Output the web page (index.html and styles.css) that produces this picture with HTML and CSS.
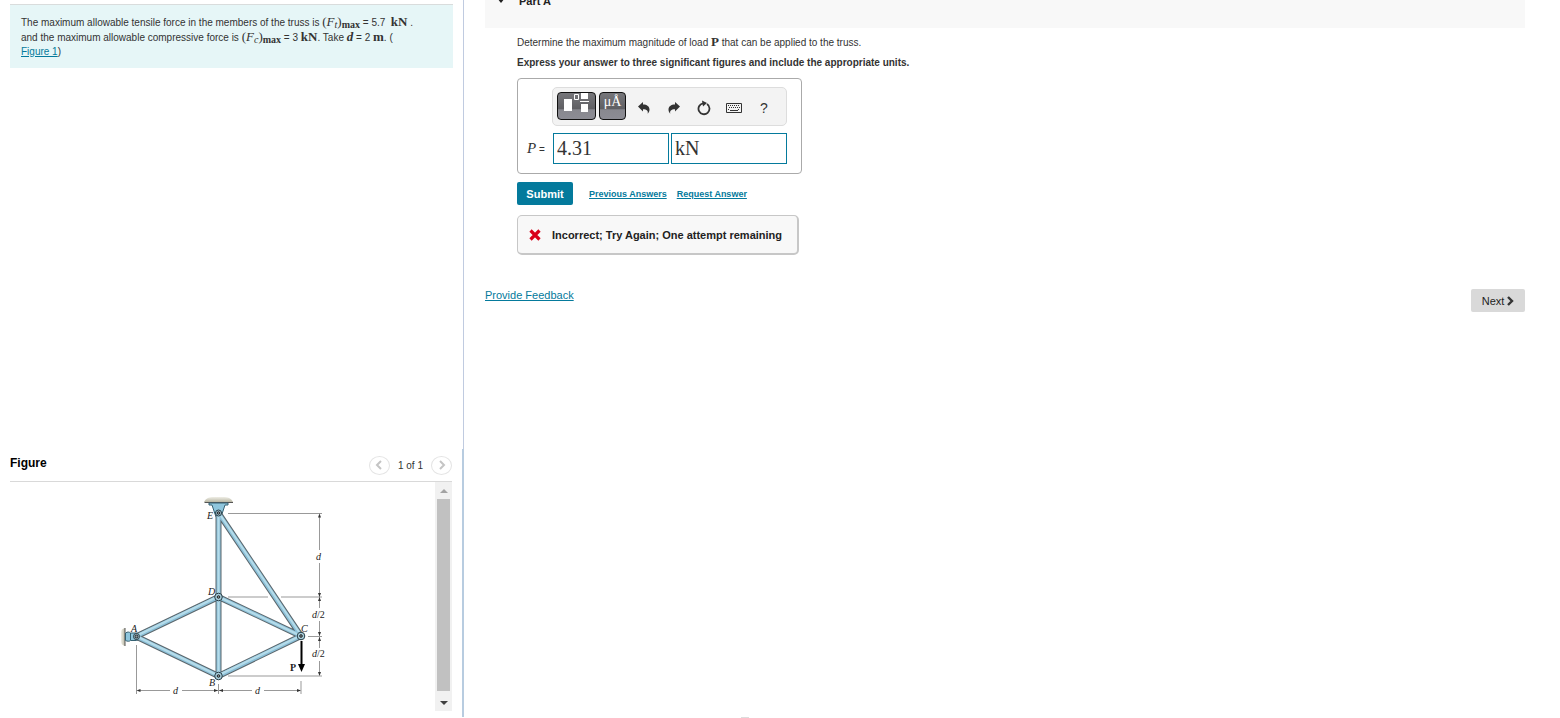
FILE: index.html
```html
<!DOCTYPE html>
<html lang="en">
<head>
    <meta charset="UTF-8">
    <meta name="viewport" content="width=device-width, initial-scale=1.0">
    <title>Truss Problem - Part A</title>
    <link rel="stylesheet" href="styles.css">
</head>
<body>
    <div class="page">
        <aside class="left-column">
            <section class="problem-pane">
                <div class="problem-text">
                    The maximum allowable tensile force in the members of the truss is
                    <span class="math">(<i>F<sub>t</sub></i>)<sub class="bold">max</sub></span> = 5.7 &nbsp;<span class="math bold">kN</span> .
                    <br>
                    and the maximum allowable compressive force is
                    <span class="math">(<i>F<sub>c</sub></i>)<sub class="bold">max</sub></span> = 3 <span class="math bold">kN</span>. Take <i class="math bold">d</i> = 2 <span class="math bold">m</span>. (
                    <br>
                    <a href="#figure">Figure 1</a>)
                </div>
            </section>

            <section class="figure-pane" id="figure">
                <div class="figure-header">
                    <h2>Figure</h2>
                    <div class="pager">
                        <button type="button" class="round-button" aria-label="Previous figure">
                            <svg width="8" height="10" viewBox="0 0 8 10"><path d="M6 1 2 5l4 4"/></svg>
                        </button>
                        <span>1 of 1</span>
                        <button type="button" class="round-button" aria-label="Next figure">
                            <svg width="8" height="10" viewBox="0 0 8 10"><path d="m2 1 4 4-4 4"/></svg>
                        </button>
                    </div>
                </div>
                <div class="figure-view">
                    <div class="figure-image">
                        <svg class="truss" width="225" height="210" viewBox="110 490 225 210">
                            <defs>
                                <linearGradient id="wall" x1="0" y1="0" x2="0" y2="1">
                                    <stop offset="0" stop-color="#efeee6"/>
                                    <stop offset="1" stop-color="#b9b7a4"/>
                                </linearGradient>
                                <linearGradient id="sideWall">
                                    <stop offset="0" stop-color="#efeee6"/>
                                    <stop offset="1" stop-color="#b9b7a4"/>
                                </linearGradient>
                            </defs>

                            <!-- dimension lines -->
                            <g class="dim">
                                <path d="M228 513.5H322M228 597H268M281 597H322M308 636.500H322M228 676H322"/>
                                <path d="M319.500 515V550M319.500 563V608M319.500 621V648M319.500 661V675"/>
                                <path d="M136.500 645V694M218.500 684V694M301 681V694"/>
                                <path d="M138 690.500H170M182 690.500H252M264 690.500H300"/>
                            </g>
                            <g class="arrow">
                                <path d="M319.500 513.500l-1.500 4h3zM319.500 597l-1.500-4h3zM319.500 597l-1.500 4h3zM319.500 636l-1.500-4h3zM319.500 637l-1.500 4h3zM319.500 676l-1.500-4h3z"/>
                                <path d="M136.500 690.500l4-1.500v3zM218 690.500l-4-1.500v3zM219 690.500l4-1.500v3zM301 690.500l-4-1.500v3z"/>
                            </g>

                            <!-- supports -->
                            <path fill="url(#wall)" d="M204 502c2-4 5-5 10-5h9c5 0 8 1 10 5z"/>
                            <path class="plate" d="M204.500 502.500H233"/>
                            <path class="steel" d="M209 503h19v2h-3l-3 9a3.500 3.500 0 0 1-7 0l-3-9h-3z"/>
                            <path fill="url(#sideWall)" d="M125 628c-4 1-4 3-4 6v7c0 3 1 4 4 5z"/>
                            <path class="plate" d="M125 628V646"/>
                            <path class="steel" d="M125.500 633c2-1.500 4-1 5 0h6a3.500 3.500 0 0 1 0 7.500h-6c-1 1-3 1-5 0z"/>
                            <path class="edge" d="M130.500 633v7"/>

                            <!-- members -->
                            <path class="member-edge" d="M218.500 513V676M218.500 513L301 636M218.500 597L301 636M218.500 676L301 636M136 636.500L218.500 597M136 636.500L218.500 676"/>
                            <path class="member" d="M218.500 513V676M218.500 513L301 636M218.500 597L301 636M218.500 676L301 636M136 636.500L218.500 597M136 636.500L218.500 676"/>
                            <path class="member-shine" d="M218.500 516V673M221 516L299 632M221 598L298 634.500M221 674L298 637M139 634.500L216 597.500M139 637.500L216 674.500"/>

                            <!-- pins -->
                            <g class="pin">
                                <circle cx="218.500" cy="513" r="3"/>
                                <circle cx="218.500" cy="597" r="3.800"/>
                                <circle cx="218.500" cy="676" r="3.800"/>
                                <circle cx="136.500" cy="636.500" r="3"/>
                                <circle cx="301" cy="636" r="3.800"/>
                            </g>
                            <g class="pin-hole">
                                <circle cx="218.500" cy="513" r="1.300"/>
                                <circle cx="218.500" cy="597" r="1.300"/>
                                <circle cx="218.500" cy="676" r="1.300"/>
                                <circle cx="136.500" cy="636.500" r="1.500"/>
                                <circle cx="301" cy="636" r="1.300"/>
                            </g>

                            <!-- load P -->
                            <path class="load" d="M301.500 641V665"/>
                            <path d="M301.500 672l-3.500-8h7z"/>

                            <g class="truss-label">
                                <text x="207" y="519">E</text>
                                <text x="208" y="595">D</text>
                                <text x="131" y="632">A</text>
                                <text x="301" y="632">C</text>
                                <text x="209" y="686">B</text>
                                <text x="316" y="560">d</text>
                                <text x="312" y="618">d<tspan class="upright">/2</tspan></text>
                                <text x="312" y="657">d<tspan class="upright">/2</tspan></text>
                                <text x="173" y="694">d</text>
                                <text x="255" y="694">d</text>
                                <text x="290" y="671" class="upright bold">P</text>
                            </g>
                        </svg>
                    </div>
                    <div class="scrollbar">
                        <button type="button" class="scroll-button" aria-label="Scroll up">
                            <svg width="8" height="4" viewBox="0 0 8 4"><path fill="#a3a3a3" d="M4 0l4 4H0z"/></svg>
                        </button>
                        <div class="scroll-thumb"></div>
                        <button type="button" class="scroll-button" aria-label="Scroll down">
                            <svg width="8" height="4" viewBox="0 0 8 4"><path fill="#404040" d="M4 4l4-4H0z"/></svg>
                        </button>
                    </div>
                </div>
            </section>
        </aside>

        <main class="right-column">
            <header class="part-header">
                <svg width="8" height="5" viewBox="0 0 8 5"><path fill="#222" d="M0 0h8L4 5z"/></svg>
                <h2>Part A</h2>
            </header>

            <div class="part-body">
                <p>Determine the maximum magnitude of load <span class="math bold">P</span> that can be applied to the truss.</p>
                <p class="bold">Express your answer to three significant figures and include the appropriate units.</p>

                <form class="answer-form">
                    <div class="answer-box">
                        <div class="toolbar">
                            <button type="button" class="dark-button wide" aria-label="Templates">
                                <svg width="26" height="20" viewBox="0 0 26 20">
                                    <path fill="#fff" d="M0 6h8v12H0zM17 0h7v6h-7zM16 8h9v1h-9zM17 11h7v8h-7z"/>
                                    <path fill="none" stroke="#fff" d="M10.500 1.500h4v5h-4z"/>
                                </svg>
                            </button>
                            <button type="button" class="dark-button" aria-label="Units">&mu;&Aring;</button>
                            <button type="button" class="tool-button" aria-label="Undo">
                                <svg width="12" height="12" viewBox="0 0 12 12"><path d="M0 4.500 5 0v2.600c4 0 6.500 2 6.500 5 0 1.600-.6 3-1.800 4.200.6-3-.7-4.600-4.700-4.600V9.500z"/></svg>
                            </button>
                            <button type="button" class="tool-button" aria-label="Redo">
                                <svg width="12" height="12" viewBox="0 0 12 12"><path d="M12 4.500 7 0v2.600c-4 0-6.500 2-6.500 5 0 1.600.6 3 1.800 4.200-.6-3 .7-4.600 4.700-4.600V9.500z"/></svg>
                            </button>
                            <button type="button" class="tool-button" aria-label="Reset">
                                <svg width="14" height="16" viewBox="0 0 14 16">
                                    <path fill="none" stroke="#333" stroke-width="1.800" d="M10 4.100A5.500 5.500 0 1 1 6 3.300"/>
                                    <path d="M5 .5l5 2.500-4 3.500z"/>
                                </svg>
                            </button>
                            <button type="button" class="tool-button" aria-label="Keyboard shortcuts">
                                <svg width="16" height="10" viewBox="0 0 16 10">
                                    <path fill="none" stroke="#333" d="M.5.500h15v9H.5z"/>
                                    <path fill="none" stroke="#333" stroke-dasharray="1 1" d="M2 2.500h12M3 4.500h11M2 6.500h2M12 6.500h2"/>
                                    <path fill="none" stroke="#333" d="M4 7.500h8"/>
                                </svg>
                            </button>
                            <button type="button" class="tool-button" aria-label="Help">?</button>
                        </div>
                        <div class="answer-row">
                            <label for="value"><i>P</i> =</label>
                            <input type="text" id="value" value="4.31">
                            <input type="text" id="units" value="kN" aria-label="Units">
                        </div>
                    </div>

                    <div class="actions">
                        <button type="submit" class="submit-button">Submit</button>
                        <a href="#previous">Previous Answers</a>
                        <a href="#request">Request Answer</a>
                    </div>
                </form>

                <div class="feedback">
                    <svg width="12" height="12" viewBox="0 0 12 12"><path stroke="#d9001b" stroke-width="3.200" d="M1.500 1.500l9 9M10.500 1.500l-9 9"/></svg>
                    <span>Incorrect; Try Again; One attempt remaining</span>
                </div>
            </div>

            <div class="part-footer">
                <a href="#feedback">Provide Feedback</a>
                <button type="button" class="next-button">
                    Next
                    <svg width="7" height="10" viewBox="0 0 7 10"><path fill="none" stroke="#333" stroke-width="2.400" d="M1 1l4 4-4 4"/></svg>
                </button>
            </div>

            <!-- top edge of the logo below the fold -->
            <div class="logo-edge"></div>
        </main>
    </div>
</body>
</html>
```
FILE: styles.css
```css
* {
    box-sizing: border-box;
}

body {
    margin: 0;
    font-family: Arial, "Liberation Sans", sans-serif;
    font-size: 10px;
    color: #333;
    background-color: #fff;
}

h2, p {
    margin: 0;
}

a {
    color: #047a9c;
}

button {
    padding: 0;
    border: none;
    font-family: inherit;
    cursor: pointer;
}

svg {
    display: block;
}

.bold {
    font-weight: bold;
}

.math {
    font-family: "Liberation Serif", serif;
    font-size: 13px;
    line-height: 1;
}

.math sub {
    font-size: 10px;
    line-height: 0;
    vertical-align: -2px;
}

.page {
    display: flex;
    height: 100vh;
    overflow: hidden;
}

/* left column */
.left-column {
    display: flex;
    flex-direction: column;
    flex: 0 0 464px;
    padding-bottom: 1px;
}

.problem-pane {
    flex: 1;
    padding: 4px 10px 0;
    border-right: 1px solid #c0cbe0;
}

.problem-text {
    padding: 10px 10px 9px 11px;
    border-top: 1px solid #d9dcdc;
    background-color: #e6f6f7;
    font-size: 10px;
    line-height: 14px;
    white-space: nowrap;
}

.figure-pane {
    padding: 0 10px 6px;
    border-right: 2px solid #b8cce0;
}

.figure-header {
    display: flex;
    justify-content: space-between;
    height: 33px;
    border-bottom: 1px solid #d9d9d9;
}

.figure-header h2 {
    padding-top: 6px;
    font-size: 12px;
    line-height: 16px;
    color: #000;
}

.pager {
    display: flex;
    align-items: center;
    gap: 8px;
}

.round-button {
    display: flex;
    align-items: center;
    justify-content: center;
    width: 21px;
    height: 19px;
    border: 1px solid #e4e4e4;
    border-radius: 50%;
    background-color: #fff;
}

.round-button path {
    fill: none;
    stroke: #c4c4c4;
    stroke-width: 2;
}

.figure-view {
    display: flex;
    height: 229px;
}

.figure-image {
    display: flex;
    flex: 1;
    justify-content: center;
    padding-top: 8px;
}

.scrollbar {
    display: flex;
    flex-direction: column;
    width: 17px;
    background-color: #f1f1f1;
}

.scroll-button {
    display: flex;
    align-items: center;
    justify-content: center;
    height: 17px;
    background-color: transparent;
}

.scroll-thumb {
    flex: 1;
    margin: 0 2px 3px;
    background-color: #c1c1c1;
}

/* truss drawing */
.dim {
    fill: none;
    stroke: #999;
    stroke-width: 1;
}

.arrow {
    fill: #333;
}

.plate {
    fill: none;
    stroke: #555;
    stroke-width: 1;
}

.steel {
    fill: #8fc6dd;
    stroke: #356172;
    stroke-width: 1;
}

.edge {
    stroke: #356172;
}

.member-edge {
    fill: none;
    stroke: #5b676d;
    stroke-width: 6;
}

.member {
    fill: none;
    stroke: #8cc0d8;
    stroke-width: 4;
}

.member-shine {
    fill: none;
    stroke: #b5dcea;
    stroke-width: 2;
}

.pin {
    fill: #a9cfdd;
    stroke: #263b44;
    stroke-width: 1;
}

.pin-hole {
    fill: #8a9aa1;
    stroke: #222;
    stroke-width: 1;
}

.load {
    stroke: #000;
    stroke-width: 2;
}

.truss-label {
    font-family: "Liberation Serif", serif;
    font-size: 10px;
    font-style: italic;
    fill: #222;
}

.upright {
    font-style: normal;
}

/* right column */
.right-column {
    display: flex;
    flex-direction: column;
    flex: 1;
    padding: 0 35px 0 21px;
}

.part-header {
    display: flex;
    align-items: flex-start;
    gap: 14px;
    height: 46px;
    margin-top: -18px;
    padding: 12px 12px 0;
    background-color: #f8f8f8;
}

.part-header svg {
    margin-top: 4px;
}

.part-header h2 {
    font-size: 11px;
    line-height: 14px;
    color: #222;
}

.part-body {
    padding: 5px 32px 0;
}

.part-body p {
    line-height: 20px;
}

.answer-box {
    width: 285px;
    height: 96px;
    margin-top: 5px;
    padding: 8px 14px 0 9px;
    border: 1px solid #aaa;
    border-radius: 4px;
}

.toolbar {
    display: flex;
    align-items: flex-start;
    height: 39px;
    margin-left: 25px;
    padding: 4px 4px 0;
    border: 1px solid #ddd;
    border-radius: 5px;
    background-color: #f3f3f3;
}

.dark-button {
    display: flex;
    justify-content: center;
    width: 27px;
    height: 28px;
    margin-right: 3px;
    border: 1px solid #111;
    border-radius: 4px;
    background: linear-gradient(#77777b, #5e5e62 62%, #88888f 64%, #8c8c94);
    color: #fff;
    font-family: "Liberation Serif", serif;
    font-size: 14px;
    line-height: 18px;
}

.dark-button.wide {
    width: 39px;
}

.tool-button {
    display: flex;
    align-items: center;
    justify-content: center;
    width: 30px;
    height: 32px;
    background-color: transparent;
    color: #333;
    font-size: 14px;
    fill: #333;
}

.answer-row {
    display: flex;
    align-items: center;
    gap: 2px;
    margin-top: 7px;
}

.answer-row label {
    flex: 0 0 24px;
    white-space: nowrap;
}

.answer-row label i {
    font-family: "Liberation Serif", serif;
    font-size: 15px;
}

.answer-row input {
    flex: 1;
    min-width: 0;
    height: 31px;
    padding: 0 3px;
    border: 1px solid #047a9c;
    background-color: #fff;
    color: #333;
    font-family: "Liberation Serif", serif;
    font-size: 20px;
}

.actions {
    display: flex;
    align-items: center;
    gap: 10px;
    margin-top: 8px;
    font-size: 9px;
    font-weight: bold;
}

.submit-button {
    width: 56px;
    height: 23px;
    margin-right: 6px;
    border-radius: 2px;
    background-color: #047a9c;
    color: #fff;
    font-size: 11px;
    font-weight: bold;
}

.feedback {
    display: flex;
    align-items: center;
    gap: 11px;
    width: 282px;
    height: 40px;
    margin-top: 10px;
    padding-left: 11px;
    border: 1px solid #c7c7c7;
    border-right-width: 2px;
    border-bottom-width: 2px;
    border-radius: 5px;
    background-color: #f8f8f8;
    color: #222;
    font-size: 11px;
    font-weight: bold;
    white-space: nowrap;
}

.part-footer {
    display: flex;
    justify-content: space-between;
    align-items: flex-start;
    margin-top: 34px;
    font-size: 11px;
}

.next-button {
    display: flex;
    align-items: center;
    justify-content: center;
    gap: 3px;
    width: 54px;
    height: 23px;
    border-radius: 2px;
    background-color: #d9d9d9;
    color: #222;
    font-size: 11px;
}

.logo-edge {
    width: 8px;
    height: 1px;
    margin-top: auto;
    margin-left: 256px;
    background-color: #ddd;
}
```
